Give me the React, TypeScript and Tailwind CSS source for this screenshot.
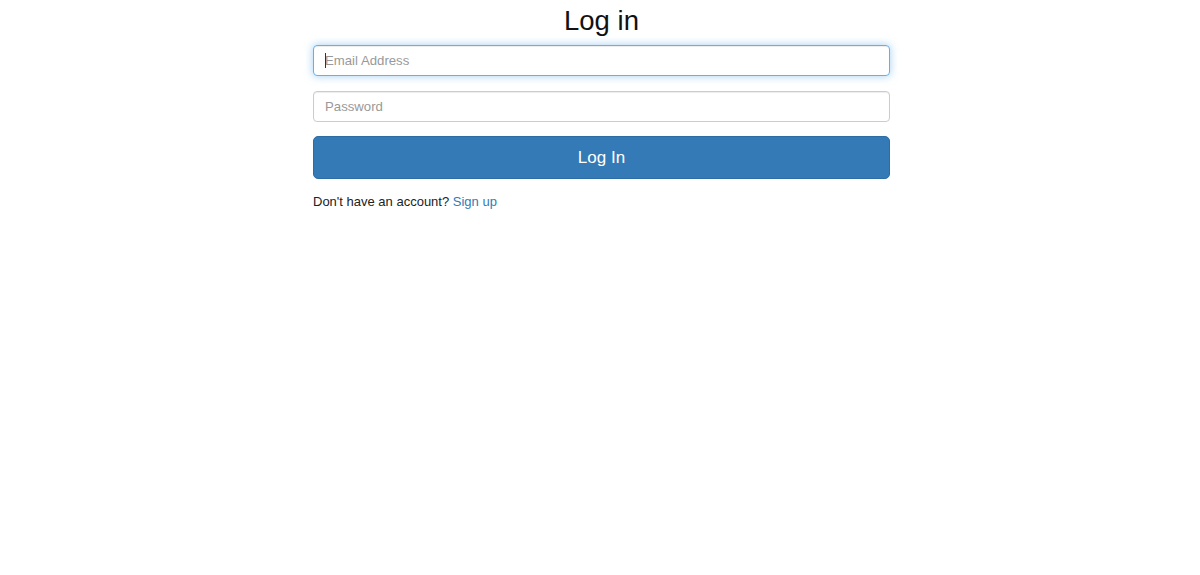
export default function App() {
  return (
    <div className="min-h-screen bg-white text-[#333]" style={{ fontFamily: '"Liberation Sans", Arial, sans-serif' }}>
      <div className="ml-[313px] flex w-[577px] flex-col">
        <h1 className="pt-[3px] text-center text-[27.5px] leading-[36px] text-[#111]">Log in</h1>
        <div className="relative mt-[6px]">
          <input
            type="email"
            placeholder="Email Address"
            className="h-[31px] w-full rounded-[4px] border border-[#66afe9] px-[11px] text-[13.2px] outline-none shadow-[inset_0_1px_1px_rgba(0,0,0,0.075),0_0_8px_rgba(102,175,233,0.6)] placeholder:text-[#999]"
          />
          <span className="absolute left-[12px] top-[8px] h-[15px] w-px bg-[#333]" />
        </div>
        <input
          type="password"
          placeholder="Password"
          className="mt-[15px] h-[31px] w-full rounded-[4px] border border-[#ccc] px-[11px] text-[13.2px] outline-none shadow-[inset_0_1px_1px_rgba(0,0,0,0.075)] placeholder:text-[#999]"
        />
        <button className="mt-[14px] h-[43px] w-full rounded-[5px] border border-[#2e6da4] bg-[#337ab7] text-[17px] text-white">
          Log In
        </button>
        <p className="mt-[13px] text-[13px] leading-[20px] text-[#222]">
          Don't have an account? <a className="text-[#337ab7]">Sign up</a>
        </p>
      </div>
    </div>
  );
}
